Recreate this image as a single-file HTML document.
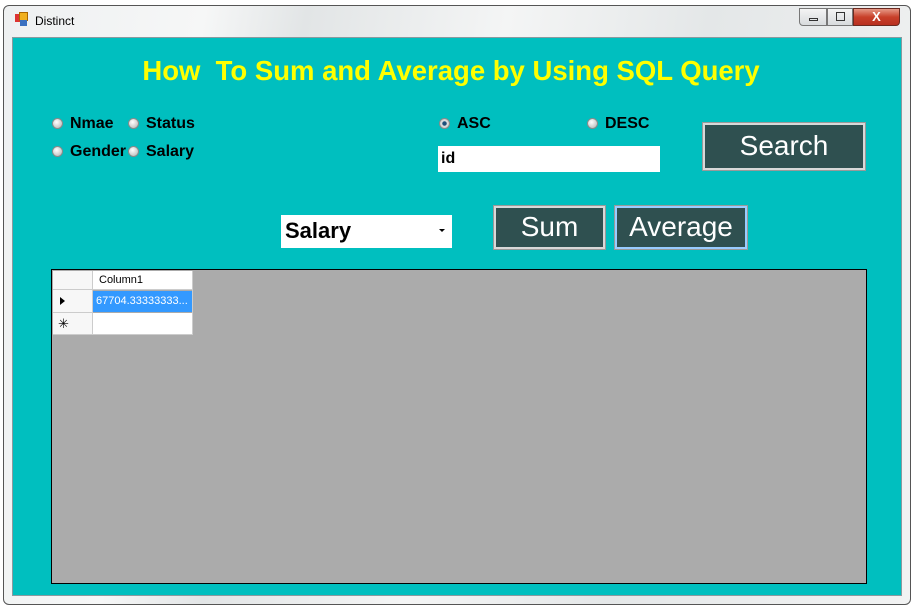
<!DOCTYPE html>
<html><head><style>
*{margin:0;padding:0;box-sizing:border-box}
body{width:914px;height:609px;background:#fff;font-family:"Liberation Sans",sans-serif;position:relative;overflow:hidden}
.abs{position:absolute}
.win{left:3px;top:5px;width:908px;height:600px;border:1px solid #555;border-radius:6px;background:linear-gradient(100deg,#eef0f1 0%,#f6f7f7 20%,#e2e5e6 30%,#f4f5f5 50%,#e4e7e8 70%,#f2f3f3 100%)}
.client{left:12px;top:37px;width:890px;height:559px;background:#00bfbf;border:1px solid #8a9a9f}
.rad{width:11px;height:11px;border-radius:50%;background:radial-gradient(circle at 40% 35%,#fff,#c8c8c8 70%,#999);border:1px solid #8a8a8a}
.lbl{font-weight:bold;font-size:16px;color:#000}
.btn{background:#2f5050;color:#fff;font-size:28px;text-align:center;border:2px solid #d8d8d8;outline:1px solid #999}
</style></head><body>
<div class="abs win"></div>
<div class="abs" style="left:15px;top:14px;width:8px;height:8px;background:#d33"></div>
<div class="abs" style="left:19px;top:12px;width:9px;height:9px;background:#f0b020;border:1px solid #a60"></div>
<div class="abs" style="left:20px;top:20px;width:7px;height:6px;background:#3a70c0"></div>
<div class="abs" style="left:35px;top:14px;font-size:12px;color:#000">Distinct</div>
<div class="abs" style="left:799px;top:8px;width:28px;height:18px;border:1px solid #777;border-radius:0 0 0 4px;background:linear-gradient(#f4f4f4,#d8dbdd)"><div class="abs" style="left:9px;top:9px;width:9px;height:3px;border:1px solid #333"></div></div>
<div class="abs" style="left:827px;top:8px;width:26px;height:18px;border:1px solid #777;background:linear-gradient(#f4f4f4,#d8dbdd)"><div class="abs" style="left:8px;top:3px;width:9px;height:9px;border:1px solid #333"></div></div>
<div class="abs" style="left:853px;top:8px;width:47px;height:18px;border:1px solid #6b2a20;border-radius:0 0 4px 0;background:linear-gradient(#e69a88,#c8402a 50%,#b83020);color:#fff;font-weight:bold;font-size:13px;text-align:center;line-height:16px">X</div>
<div class="abs client"></div>
<div class="abs" style="left:0;top:55px;width:902px;text-align:center;font-size:27.5px;font-weight:bold;color:#ffff00">How&nbsp; To Sum and Average by Using SQL Query</div>
<div class="abs rad" style="left:52px;top:118px"></div><div class="abs lbl" style="left:70px;top:115px">Nmae</div>
<div class="abs rad" style="left:128px;top:118px"></div><div class="abs lbl" style="left:146px;top:115px">Status</div>
<div class="abs rad" style="left:52px;top:146px"></div><div class="abs lbl" style="left:70px;top:143px">Gender</div>
<div class="abs rad" style="left:128px;top:146px"></div><div class="abs lbl" style="left:146px;top:143px">Salary</div>
<div class="abs rad" style="left:439px;top:118px;background:radial-gradient(circle,#1d4f7a 30%,#e0e0e0 40%,#bbb)"></div><div class="abs lbl" style="left:457px;top:115px">ASC</div>
<div class="abs rad" style="left:587px;top:118px"></div><div class="abs lbl" style="left:605px;top:115px">DESC</div>
<div class="abs" style="left:438px;top:146px;width:222px;height:26px;background:#fff;font-weight:bold;font-size:16px;padding:4px 3px">id</div>
<div class="abs btn" style="left:703px;top:123px;width:162px;height:47px;line-height:42px">Search</div>
<div class="abs" style="left:281px;top:215px;width:171px;height:33px;background:#fff;font-weight:bold;font-size:22px;padding:3px 4px">Salary<span style="position:absolute;right:7px;top:14px;width:0;height:0;border-left:3px solid transparent;border-right:3px solid transparent;border-top:3px solid #000"></span></div>
<div class="abs btn" style="left:494px;top:206px;width:111px;height:43px;line-height:38px">Sum</div>
<div class="abs btn" style="left:615px;top:206px;width:132px;height:43px;line-height:38px;border-color:#9cf">Average</div>
<div class="abs" style="left:51px;top:269px;width:816px;height:315px;background:#ababab;border:1px solid #000"></div>
<div class="abs" style="left:53px;top:271px;width:40px;height:64px;background:#f7f7f7;border-right:1px solid #ccc"></div>
<div class="abs" style="left:53px;top:271px;width:140px;height:19px;border-bottom:1px solid #ccc"></div>
<div class="abs" style="left:93px;top:271px;width:100px;height:19px;background:#fff;border-right:1px solid #ccc;border-bottom:1px solid #ccc;font-size:11px;padding:3px 6px">Column1</div>
<div class="abs" style="left:53px;top:312px;width:40px;height:1px;background:#ccc"></div>
<div class="abs" style="left:93px;top:291px;width:99px;height:21px;background:#3399ff;color:#fff;font-size:11px;padding:4px 3px">67704.33333333...</div>
<div class="abs" style="left:93px;top:313px;width:99px;height:21px;background:#fff"></div>
<div class="abs" style="left:53px;top:334px;width:140px;height:1px;background:#ccc"></div>
<div class="abs" style="left:192px;top:290px;width:1px;height:45px;background:#ccc"></div>
<div class="abs" style="left:60px;top:297px;width:0;height:0;border-top:4px solid transparent;border-bottom:4px solid transparent;border-left:5px solid #000"></div>
<div class="abs" style="left:58px;top:316px;font-size:13px">✳</div>
</body></html>
